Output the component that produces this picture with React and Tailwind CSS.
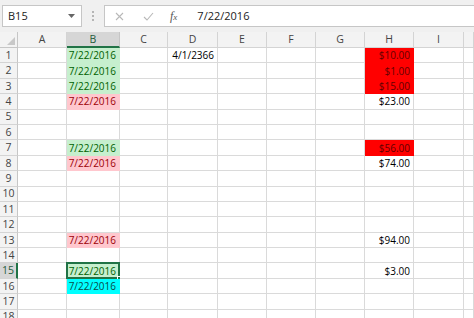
import React from 'react';

const COLS = ['A', 'B', 'C', 'D', 'E', 'F', 'G', 'H', 'I', ''];

const STYLES = {
  green: 'bg-[#c6efce] border-[#c6efce] text-[#006100]',
  pink: 'bg-[#ffc7ce] border-[#ffc7ce] text-[#9c0006]',
  red: 'bg-[#ff0000] border-[#ff0000] text-[#640000]',
  cyan: 'bg-[#00ffff] border-[#00ffff] text-[#0a4a48]',
  plain: 'bg-white border-[#dadada] text-black',
};

const DATE = '7/22/2016';

const cells = {
  'B1': { v: DATE, s: 'green' },
  'B2': { v: DATE, s: 'green' },
  'B3': { v: DATE, s: 'green' },
  'B4': { v: DATE, s: 'pink' },
  'B7': { v: DATE, s: 'green' },
  'B8': { v: DATE, s: 'pink' },
  'B13': { v: DATE, s: 'pink' },
  'B15': { v: DATE, s: 'green', selected: true },
  'B16': { v: DATE, s: 'cyan' },
  'D1': { v: '4/1/2366', s: 'plain' },
  'H1': { v: '$10.00', s: 'red' },
  'H2': { v: '$1.00', s: 'red' },
  'H3': { v: '$15.00', s: 'red' },
  'H4': { v: '$23.00', s: 'plain' },
  'H7': { v: '$56.00', s: 'red' },
  'H8': { v: '$74.00', s: 'plain' },
  'H13': { v: '$94.00', s: 'plain' },
  'H15': { v: '$3.00', s: 'plain' },
};

const rows = Array.from({ length: 18 }, (_, i) => i + 1);

function FormulaBar() {
  return (
    <div className="flex h-[32px] items-center bg-[#f0f0f0] pl-[2px]">
      <div className="flex h-[22px] w-[80px] items-center justify-between border border-[#c6c6c6] bg-white pl-[5px] pr-[6px] text-[11px] text-[#222]">
        <span>B15</span>
        <svg width="7" height="4" viewBox="0 0 7 4">
          <path d="M0 0h7L3.5 4z" fill="#666" />
        </svg>
      </div>
      <div className="flex w-[22px] flex-col items-center gap-[2px]">
        <span className="h-[2px] w-[2px] bg-[#b5b5b5]" />
        <span className="h-[2px] w-[2px] bg-[#b5b5b5]" />
        <span className="h-[2px] w-[2px] bg-[#b5b5b5]" />
      </div>
      <div className="flex h-[22px] flex-1 items-center border border-r-0 border-[#c6c6c6] bg-white">
        <svg className="ml-[10px]" width="9" height="9" viewBox="0 0 9 9">
          <path d="M1 1l7 7M8 1l-7 7" stroke="#b8b8b8" strokeWidth="1.1" fill="none" />
        </svg>
        <svg className="ml-[19px]" width="11" height="9" viewBox="0 0 11 9">
          <path d="M1 5l3 3 6-7" stroke="#b8b8b8" strokeWidth="1.1" fill="none" />
        </svg>
        <span className="ml-[16px] font-['Liberation_Serif',serif] text-[12px] italic text-[#555]">
          f<span className="text-[9px]">x</span>
        </span>
        <span className="ml-[20px] text-[11px] text-[#222]">{DATE}</span>
      </div>
    </div>
  );
}

export default function App() {
  return (
    <div className="h-[318px] w-[474px] overflow-hidden bg-white font-['Open_Sans',sans-serif]">
      <FormulaBar />
      <div className="grid grid-cols-[18px_49px_53px_48px_50px_49px_49px_49px_49px_50px_1fr] grid-rows-[16px_repeat(18,15.4px)]">
        <div className="relative border-r border-b border-[#c6c6c6] bg-[#f3f3f3]">
          <svg className="absolute bottom-[2px] right-[2px]" width="8" height="8" viewBox="0 0 8 8">
            <path d="M8 0v8H0z" fill="#c8c8c8" />
          </svg>
        </div>
        {COLS.map((c, i) => (
          <div
            key={i}
            className={`flex items-center justify-center border-r pt-[1px] text-[10.5px] ${
              c === 'B'
                ? 'border-b-2 border-r-[#c6c6c6] border-b-[#217346] bg-[#d6d6d6] text-[#1f5c3a]'
                : 'border-b border-[#d4d4d4] bg-[#f3f3f3] text-[#444]'
            }`}
          >
            {c}
          </div>
        ))}
        {rows.map((r) => (
          <React.Fragment key={r}>
            <div
              className={`flex items-center justify-center border-b border-b-[#d4d4d4] pt-[1px] text-[10.5px] ${
                r === 15
                  ? 'border-r-2 border-r-[#217346] bg-[#d6d6d6] text-[#1f5c3a]'
                  : 'border-r border-r-[#c6c6c6] bg-[#f3f3f3] text-[#444]'
              }`}
            >
              {r}
            </div>
            {COLS.map((c, i) => {
              const cell = cells[c + r];
              const style = cell ? STYLES[cell.s] : STYLES.plain;
              return (
                <div
                  key={i}
                  className={`relative flex items-center justify-end whitespace-nowrap border-r border-b pt-[1px] pr-[3px] text-[10px] ${style}`}
                >
                  {cell && cell.v}
                  {cell && cell.selected && (
                    <div className="absolute inset-[-1px] border-2 border-[#217346]">
                      <div className="absolute bottom-[-4px] right-[-4px] h-[5px] w-[5px] border border-white bg-[#217346]" />
                    </div>
                  )}
                </div>
              );
            })}
          </React.Fragment>
        ))}
      </div>
    </div>
  );
}
